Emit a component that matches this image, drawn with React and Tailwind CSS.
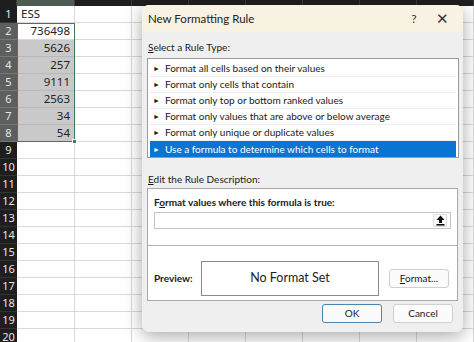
import React from "react";

const ROWS = Array.from({ length: 20 }, (_, i) => i + 1);
const OTHER_COLS = [0, 1, 2, 3, 4, 5, 6, 7];
const VALUES = { 1: "ESS", 2: "736498", 3: "5626", 4: "257", 5: "9111", 6: "2563", 7: "34", 8: "54" };

const RULES = [
  "Format all cells based on their values",
  "Format only cells that contain",
  "Format only top or bottom ranked values",
  "Format only values that are above or below average",
  "Format only unique or duplicate values",
  "Use a formula to determine which cells to format",
];

const Sheet = () => {
  return (
    <div className="relative w-[474px] h-[342px] overflow-hidden bg-white font-['Noto_Sans',sans-serif]">
      {/* column headers */}
      <div className="flex h-[6px] bg-[#1f1f1f]">
        <div className="w-[17px] shrink-0 border-r border-[#3a3a3a]"></div>
        <div className="w-[58px] shrink-0 bg-[#4f5c54] border-r border-[#3a3a3a]"></div>
        {OTHER_COLS.map((c) => (
          <div key={c} className="w-[57px] shrink-0 border-r border-[#3a3a3a]"></div>
        ))}
      </div>
      {/* rows */}
      {ROWS.map((r) => {
        const sel = r >= 2 && r <= 8;
        return (
          <div key={r} className="flex h-[17px]">
            <div
              className={`w-[17px] shrink-0 flex items-center justify-center text-[11px] text-[#e6e6e6] border-b ${
                sel ? "bg-[#5c5f5d] border-[#777]" : "bg-[#1e1e1e] border-[#333]"
              }`}
            >
              {r}
            </div>
            <div
              className={`w-[58px] shrink-0 flex items-center px-[4px] text-[11.5px] text-[#222] border-r border-b ${
                r === 1 ? "justify-start" : "justify-end"
              } ${sel && r !== 2 ? "bg-[#c9c9c9] border-[#b8b8b8]" : "bg-white border-[#d9d9d9]"}`}
            >
              {VALUES[r]}
            </div>
            {OTHER_COLS.map((c) => (
              <div key={c} className="w-[57px] shrink-0 border-r border-b border-[#d9d9d9]"></div>
            ))}
          </div>
        );
      })}
      {/* selection outline */}
      <div className="absolute left-[17px] top-[23px] w-[58px] h-[119px] border-[1.5px] border-[#3f7a5a]"></div>
      <div className="absolute left-[72px] top-[139px] w-[5px] h-[5px] bg-[#3f7a5a] border border-white"></div>

      <Dialog />
    </div>
  );
};

const UploadIcon = () => (
  <svg width="9" height="11" viewBox="0 0 9 11">
    <path d="M4.5 0.5 L8.5 5 L6 5 L6 8 L3 8 L3 5 L0.5 5 Z" fill="#111" />
    <rect x="0.5" y="9" width="8" height="1.6" fill="#111" />
  </svg>
);

const Dialog = () => {
  return (
    <div className="absolute left-[142px] top-[5px] w-[321px] h-[327px] rounded-[7px] bg-[#efefef] shadow-[0_4px_18px_rgba(0,0,0,0.35)] overflow-hidden text-[10px] text-[#1a1a1a] font-['Lato',sans-serif]">
      {/* title bar */}
      <div className="flex items-center h-[27px] bg-[#f8f2e3] pl-[6px]">
        <span className="text-[11.5px] text-[#222]">New Formatting Rule</span>
        <span className="ml-auto w-[14px] text-center text-[12px] text-[#333]">?</span>
        <span className="w-[42px] text-center text-[15px] leading-none text-[#333]">✕</span>
      </div>

      <div className="px-[5px]">
        <div className="h-[15px] mt-[8px] flex items-center pl-[1px]">
          <span>
            <span className="underline">S</span>elect a Rule Type:
          </span>
        </div>
        {/* rule list */}
        <div className="mt-[3px] w-[312px] h-[100px] bg-white border border-[#9a9a9a] p-[2px]">
          {RULES.map((t, i) => {
            const active = i === RULES.length - 1;
            return (
              <div
                key={t}
                className={`h-[16px] flex items-center pl-[3px] gap-[5px] ${
                  active ? "bg-[#0a74d4] text-white" : "border-b border-[#eeeeee]"
                }`}
              >
                <span className="text-[7px]">►</span>
                <span>{t}</span>
              </div>
            );
          })}
        </div>

        <div className="h-[15px] mt-[14px] flex items-center pl-[1px]">
          <span>
            <span className="underline">E</span>dit the Rule Description:
          </span>
        </div>
        {/* description box */}
        <div className="mt-[1px] w-[311px] h-[113px] bg-white border border-[#a8a8a8]">
          <div className="px-[6px] pt-[6px]">
            <div className="font-bold text-[10px] h-[14px] flex items-center">
              <span>
                F<span className="underline">o</span>rmat values where this formula is true:
              </span>
            </div>
            <div className="mt-[3px] w-[297px] h-[17px] border border-[#c4c4c4] flex justify-end items-center pr-[3px]">
              <div className="w-[14px] h-[13px] flex items-center justify-center bg-[#fafafa] border border-[#ddd]">
                <UploadIcon />
              </div>
            </div>
          </div>
          <div className="mt-[16px] border-t border-[#b0b0b0]"></div>
          <div className="flex items-center px-[6px] mt-[15px]">
            <span className="w-[47px] font-bold">Preview:</span>
            <div className="w-[178px] h-[35px] border border-[#8a8a8a] flex items-center justify-center text-[12.5px] text-[#222]">
              No Format Set
            </div>
            <div className="ml-[10px] w-[60px] h-[19px] border border-[#cfcfcf] rounded-[3px] bg-[#fbfbfb] flex items-center justify-center text-[10px]">
              <span>
                <span className="underline">F</span>ormat...
              </span>
            </div>
          </div>
        </div>

        {/* buttons */}
        <div className="flex justify-end gap-[11px] mt-[3px] pr-[5px]">
          <div className="w-[60px] h-[19px] rounded-[3px] border border-[#4b87ad] bg-[#fbfbfb] flex items-center justify-center text-[10px]">
            OK
          </div>
          <div className="w-[60px] h-[19px] rounded-[3px] border border-[#d0d0d0] bg-[#fbfbfb] flex items-center justify-center text-[10px]">
            Cancel
          </div>
        </div>
      </div>
    </div>
  );
};

export default function App() {
  return <Sheet />;
}
